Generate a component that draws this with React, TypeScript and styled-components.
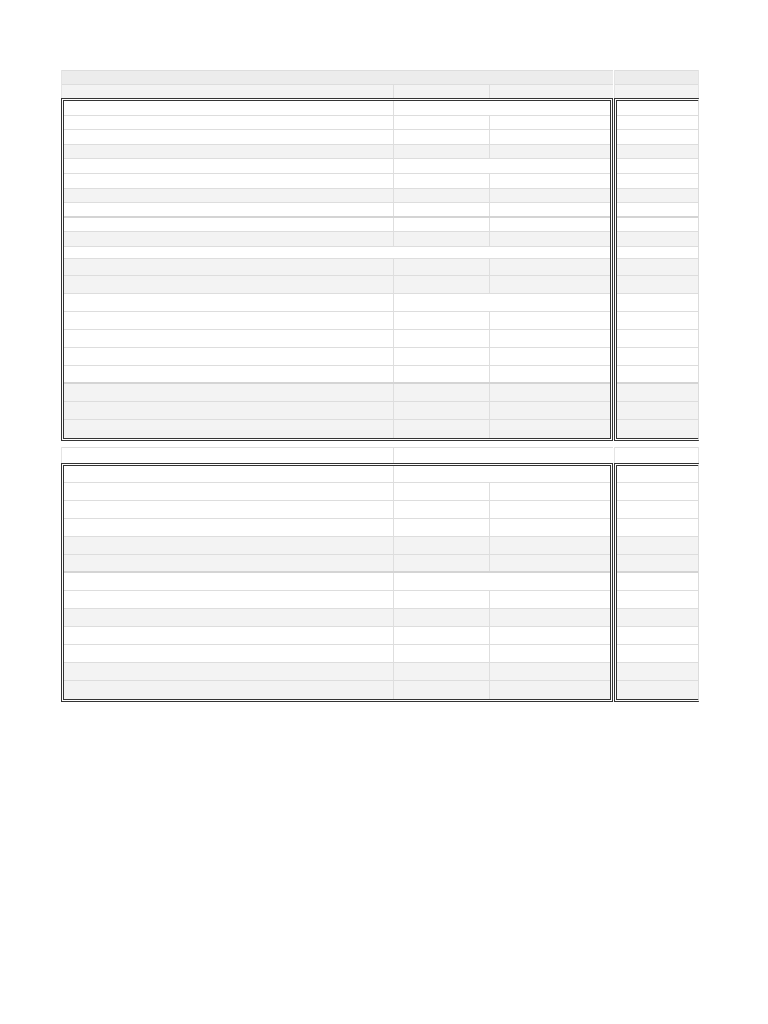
import { createGlobalStyle, css } from 'styled-components';
import styled from 'styled-components';

const GlobalStyle = createGlobalStyle`
  body {
    margin: 0;
    background: #ffffff;
    font-family: "Liberation Sans", Arial, sans-serif;
  }
`;

const Page = styled.div`
  padding: 70px 0 0 61px;
  display: flex;
  flex-direction: column;
`;

const Block = styled.div<{ $mt?: number }>`
  display: flex;
  gap: 1px;
  margin-top: ${(p) => p.$mt || 0}px;
`;

const Pane = styled.div<{ $side: 'main' | 'side'; $boxed?: boolean; $open?: boolean }>`
  width: ${(p) => (p.$side === 'main' ? 552 : 85)}px;
  box-sizing: border-box;
  display: flex;
  flex-direction: column;
  ${(p) =>
    p.$boxed &&
    css`
      border: 3px double #333333;
    `}
  ${(p) =>
    p.$boxed &&
    p.$side === 'side' &&
    css`
      border-right: 1px solid #dcdcdc;
    `}
  ${(p) =>
    p.$open &&
    css`
      border-left: 1px solid #e4e4e4;
      border-right: ${p.$side === 'side' ? '1px solid #e4e4e4' : 'none'};
    `}
`;

const Row = styled.div<{
  $h: number;
  $tone: 'w' | 'g' | 'h';
  $cols: string;
  $thick?: boolean;
  $last?: boolean;
  $topLine?: boolean;
}>`
  display: grid;
  grid-template-columns: ${(p) => p.$cols};
  height: ${(p) => p.$h}px;
  box-sizing: border-box;
  background: ${(p) => (p.$tone === 'g' ? '#f3f3f3' : p.$tone === 'h' ? '#ececec' : '#ffffff')};
  border-bottom: ${(p) =>
    p.$last ? 'none' : p.$thick ? '2px solid #d4d4d4' : '1px solid #dddddd'};
  border-top: ${(p) => (p.$topLine ? '1px solid #dddddd' : 'none')};
`;

const Cell = styled.div<{ $span?: number }>`
  grid-column: span ${(p) => p.$span || 1};
  & + & {
    border-left: 1px solid #dedede;
  }
`;

const Gap = styled.div<{ $h: number }>`
  height: ${(p) => p.$h}px;
  background: #ffffff;
`;

type Spec =
  | { gap: number }
  | { h: number; tone: 'w' | 'g'; merged?: boolean; thick?: boolean; last?: boolean; topLine?: boolean };

const f = 14.6;

const box1: Spec[] = [
  { h: f, tone: 'w', merged: true },
  { h: f, tone: 'w' },
  { h: f, tone: 'w' },
  { h: f, tone: 'g' },
  { h: f, tone: 'w', merged: true },
  { h: f, tone: 'w' },
  { h: f, tone: 'g' },
  { h: f, tone: 'w', thick: true },
  { h: f, tone: 'w' },
  { h: f, tone: 'g' },
  { gap: 11 },
  { h: 18, tone: 'g', topLine: true },
  { h: 18, tone: 'g' },
  { h: 18, tone: 'w', merged: true },
  { h: 18, tone: 'w' },
  { h: 18, tone: 'w' },
  { h: 18, tone: 'w' },
  { h: 18, tone: 'w', thick: true },
  { h: 18, tone: 'g' },
  { h: 18, tone: 'g' },
  { h: 18, tone: 'g', last: true },
];

const box2: Spec[] = [
  { h: 17, tone: 'w', merged: true },
  { h: 18, tone: 'w' },
  { h: 18, tone: 'w' },
  { h: 18, tone: 'w' },
  { h: 18, tone: 'g' },
  { h: 18, tone: 'g', thick: true },
  { h: 18, tone: 'w', merged: true },
  { h: 18, tone: 'w' },
  { h: 18, tone: 'g' },
  { h: 18, tone: 'w' },
  { h: 18, tone: 'w' },
  { h: 18, tone: 'g' },
  { h: 18, tone: 'g', last: true },
];

// main pane: inside the double box the last column is 3px narrower
const mainCols = (boxed: boolean) => `1fr 96px ${boxed ? 121 : 124}px`;

function Rows({ specs, side }: { specs: Spec[]; side: 'main' | 'side' }) {
  return (
    <>
      {specs.map((s, i) => {
        if ('gap' in s) return <Gap key={i} $h={s.gap} />;
        return (
          <Row
            key={i}
            $h={s.h}
            $tone={s.tone}
            $cols={side === 'main' ? mainCols(true) : '1fr'}
            $thick={s.thick}
            $last={s.last}
            $topLine={s.topLine}
          >
            {side === 'main' ? (
              s.merged ? (
                <>
                  <Cell />
                  <Cell $span={2} />
                </>
              ) : (
                <>
                  <Cell />
                  <Cell />
                  <Cell />
                </>
              )
            ) : (
              <Cell />
            )}
          </Row>
        );
      })}
    </>
  );
}

export default function App() {
  return (
    <>
      <GlobalStyle />
      <Page>
        <Block>
          <Pane $side="main" $open>
            <Row $h={15} $tone="h" $cols="1fr" $topLine>
              <Cell />
            </Row>
            <Row $h={13} $tone="g" $cols={mainCols(false)} $last>
              <Cell />
              <Cell />
              <Cell />
            </Row>
          </Pane>
          <Pane $side="side" $open>
            <Row $h={15} $tone="h" $cols="1fr" $topLine>
              <Cell />
            </Row>
            <Row $h={13} $tone="g" $cols="1fr" $last>
              <Cell />
            </Row>
          </Pane>
        </Block>

        <Block>
          <Pane $side="main" $boxed>
            <Rows specs={box1} side="main" />
          </Pane>
          <Pane $side="side" $boxed>
            <Rows specs={box1} side="side" />
          </Pane>
        </Block>

        <Block $mt={6}>
          <Pane $side="main" $open>
            <Row $h={16} $tone="w" $cols={mainCols(false)} $topLine $last>
              <Cell />
              <Cell $span={2} />
            </Row>
          </Pane>
          <Pane $side="side" $open>
            <Row $h={16} $tone="w" $cols="1fr" $topLine $last>
              <Cell />
            </Row>
          </Pane>
        </Block>

        <Block>
          <Pane $side="main" $boxed>
            <Rows specs={box2} side="main" />
          </Pane>
          <Pane $side="side" $boxed>
            <Rows specs={box2} side="side" />
          </Pane>
        </Block>
      </Page>
    </>
  );
}
